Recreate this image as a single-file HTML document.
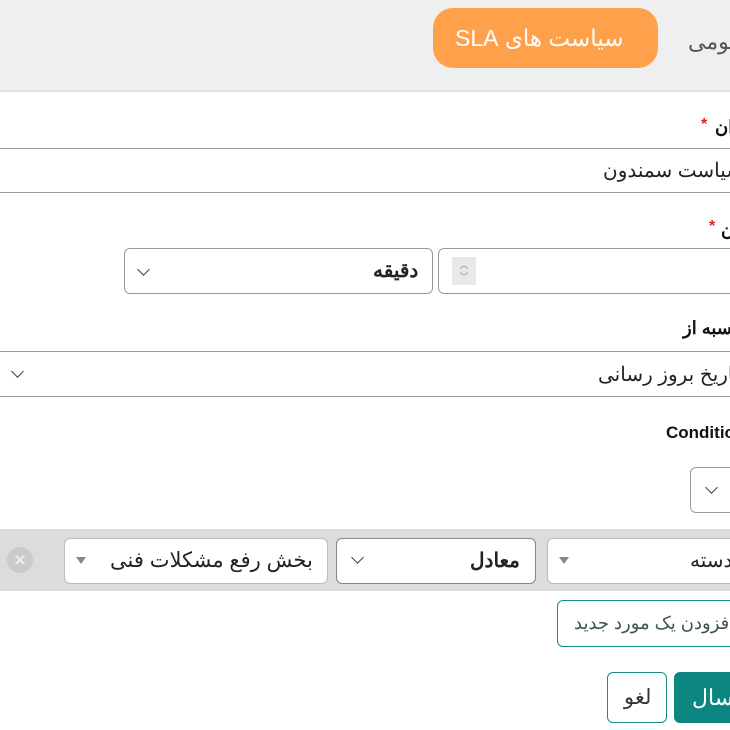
<!DOCTYPE html>
<html><head><meta charset="utf-8"><style>
html,body{margin:0;padding:0;width:730px;height:730px;overflow:hidden;background:#fff;font-family:"Liberation Sans","Noto Sans CJK SC",sans-serif;}
.a{position:absolute;white-space:nowrap;}
.box{position:absolute;box-sizing:border-box;border:1px solid #9a9a9a;border-radius:6px;background:#fff;}
.chev{position:absolute;width:8px;height:8px;border-right:1.6px solid #444;border-bottom:1.6px solid #444;transform:rotate(45deg);}
.tri{position:absolute;width:0;height:0;border-left:5px solid transparent;border-right:5px solid transparent;border-top:7px solid #888;}
.t{font-size:20px;color:#222;direction:rtl;}
.lbl{font-size:18px;font-weight:bold;color:#111;direction:rtl;}
.star{color:#e02020;font-weight:bold;font-size:16px;}
</style></head><body>
<div class="a" style="left:0;top:0;width:730px;height:90px;background:#efefef;border-bottom:2px solid #e0e0e0;"></div>
<div class="a" style="left:433px;top:8px;width:225px;height:60px;background:#ffa04a;border-radius:20px;"></div>
<div class="a" style="left:455px;top:8px;height:60px;line-height:60px;color:#fff;font-size:23px;direction:rtl;">سیاست های SLA</div>
<div class="a" style="left:688px;top:8px;height:68px;line-height:68px;font-size:22px;color:#555;direction:rtl;">عمومی</div>

<div class="a lbl" style="left:715px;top:117px;">عنوان</div>
<div class="a star" style="left:701px;top:116px;">*</div>
<div class="box" style="left:-5px;top:148px;width:760px;height:45px;"></div>
<div class="a t" style="left:603px;top:148px;line-height:47px;">سیاست سمندون</div>

<div class="a lbl" style="left:721px;top:220px;">زمان</div>
<div class="a star" style="left:709px;top:218px;">*</div>
<div class="box" style="left:124px;top:248px;width:309px;height:46px;"></div>
<div class="chev" style="left:139px;top:265px;"></div>
<div class="a t" style="left:373px;top:248px;line-height:46px;font-weight:bold;">دقیقه</div>
<div class="box" style="left:438px;top:248px;width:320px;height:46px;"></div>
<div class="a" style="left:452px;top:257px;width:24px;height:28px;background:#e8e8e8;color:#888;font-size:9px;text-align:center;line-height:12px;padding-top:2px;box-sizing:border-box;">︿<br>﹀</div>

<div class="a lbl" style="left:683px;top:318px;">محاسبه از</div>
<div class="box" style="left:-5px;top:351px;width:760px;height:46px;"></div>
<div class="chev" style="left:13px;top:367px;"></div>
<div class="a t" style="left:598px;top:351px;line-height:48px;">تاریخ بروز رسانی</div>

<div class="a" style="left:666px;top:423px;font-size:17px;font-weight:bold;color:#111;">Conditions</div>
<div class="box" style="left:690px;top:467px;width:80px;height:46px;"></div>
<div class="chev" style="left:707px;top:483px;"></div>

<div class="a" style="left:0;top:529px;width:730px;height:62px;background:#dcdcdc;"></div>
<div class="a" style="left:7px;top:547px;width:26px;height:26px;border-radius:50%;background:#cacaca;color:#eee;font-size:18px;font-weight:bold;text-align:center;line-height:26px;">×</div>
<div class="box" style="left:64px;top:538px;width:264px;height:46px;border-color:#bbb;"></div>
<div class="tri" style="left:76px;top:557px;"></div>
<div class="a t" style="left:110px;top:538px;line-height:46px;font-size:21px;">بخش رفع مشکلات فنی</div>
<div class="box" style="left:336px;top:538px;width:200px;height:46px;border-color:#888;"></div>
<div class="chev" style="left:353px;top:553px;"></div>
<div class="a t" style="left:470px;top:538px;line-height:46px;font-weight:bold;">معادل</div>
<div class="box" style="left:547px;top:538px;width:220px;height:46px;border-color:#bbb;"></div>
<div class="tri" style="left:559px;top:557px;"></div>
<div class="a t" style="left:690px;top:538px;line-height:46px;">دسته</div>

<div class="box" style="left:557px;top:600px;width:200px;height:47px;border:1.5px solid #1a8a84;"></div>
<div class="a" style="left:574px;top:600px;line-height:47px;font-size:18px;color:#3d5550;direction:rtl;">افزودن یک مورد جدید</div>

<div class="box" style="left:607px;top:672px;width:60px;height:51px;border:1.5px solid #1a8a84;"></div>
<div class="a" style="left:624px;top:672px;line-height:51px;font-size:21px;color:#333;direction:rtl;">لغو</div>
<div class="a" style="left:674px;top:672px;width:90px;height:51px;background:#0d8580;border-radius:6px;"></div>
<div class="a" style="left:692px;top:672px;line-height:51px;font-size:22px;color:#fff;direction:rtl;">ارسال</div>
</body></html>
